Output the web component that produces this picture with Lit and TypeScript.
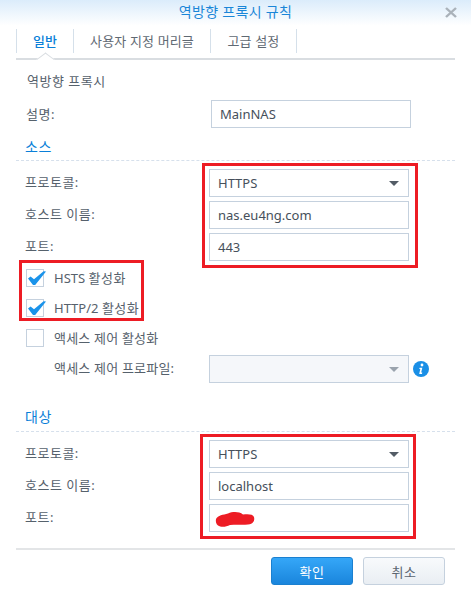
import { LitElement, html, css } from "lit";
import { customElement } from "lit/decorators.js";

const check = html`<svg class="tick" viewBox="0 0 18 14"><path d="M0 7.5 L2.6 5.4 L6 8.2 L15.6 0.2 L18 0.6 L7.2 14 L5 14 Z" fill="#1a93ea"/></svg>`;
const arrow = html`<svg class="arrow" viewBox="0 0 10 5"><path d="M0 0H10L5 5Z"/></svg>`;

@customElement("app-root")
export class AppRoot extends LitElement {
  static styles = css`
    :host { display: block; position: relative; width: 471px; height: 589px; overflow: hidden; background: #fff;
      font-family: "Noto Sans", "Noto Sans CJK KR", sans-serif; font-size: 13px; color: #56616c; }
    * { box-sizing: border-box; }
    .ko { letter-spacing: .5px; }
    .ko.tight { letter-spacing: .2px; }
    .head { height: 28px; display: flex; align-items: center; justify-content: center; position: relative;
      background: linear-gradient(#dbecfb, #ffffff 92%); color: #1a86d8; font-size: 14px; letter-spacing: .3px; padding-bottom: 6px; }
    .close { position: absolute; left: 445px; top: 6.5px; width: 12px; height: 11px; }
    .tabs { margin: 0 16px; height: 32px; border-bottom: 2px solid #d9dde1; display: flex; align-items: flex-start; position: relative; padding-top: 1px; }
    .tab { height: 24px; display: flex; align-items: center; justify-content: center; border-right: 1px solid #d5e0ea; color: #5f6973; font-size: 13px; letter-spacing: .15px; padding-bottom: 2px; }
    .tab.a { width: 58px; border-left: 1px solid #d5e0ea; color: #0a7fd8; font-weight: 500; }
    .tab.b { width: 137px; }
    .tab.c { width: 86px; }
    .notch { position: absolute; left: 23px; top: 25px; width: 13px; height: 13px; background: #fff; border-left: 1px solid #d9dde1; border-top: 1px solid #d9dde1; transform: scaleY(.75) rotate(45deg); }
    .body { padding: 0 16px; }
    .intro { margin: 11px 0 0 11px; height: 20px; line-height: 20px; padding-bottom: 1px; }
    .row { display: flex; align-items: center; height: 28px; margin-top: 4px; padding-left: 9px; }
    .row.first { margin-top: 8px; }
    .row.desc { margin-top: 9px; padding-left: 10px; }
    .row .lab { width: 184px; flex: none; padding-bottom: 3px; }
    .row.desc .lab { width: 185px; padding-bottom: 2px; }
    .field { width: 200px; height: 28px; border: 1px solid #c5d1de; display: flex; align-items: center; justify-content: space-between; padding: 0 9px 1px 8px; background: #fff; color: #46505b; }
    .field.off { background: #f5f7fa; }
    .arrow { width: 10px; height: 5px; fill: #535c66; margin-top: 1px; }
    .field.off .arrow { fill: #9aa3ad; }
    .info { width: 16px; height: 16px; margin-left: 4px; flex: none; }
    .sect { height: 25px; border-bottom: 1px dashed #d6e0ec; margin-top: 8px; color: #0a7fd8; font-size: 14px; line-height: 22px; padding-left: 9px; letter-spacing: .5px; }
    .sect.tgt { margin-top: 24px; line-height: 20px; }
    .chk { display: flex; align-items: center; height: 18px; margin: 12px 0 0 10px; position: relative; }
    .chk.first { margin-top: 8px; }
    .txt { padding-bottom: 2px; }
    .box { width: 18px; height: 18px; border: 1px solid #c5d1de; margin-right: 10px; position: relative; flex: none; }
    .tick { position: absolute; left: 1px; top: 1px; width: 18px; height: 14px; }
    .row.sub { margin-top: 8px; }
    .row.sub .lab { padding-left: 29px; }
    .foot { margin: 16px 16px 0; border-top: 2px solid #e3e5e7; display: flex; justify-content: flex-end; gap: 10px; padding: 7px 10px 0 0; }
    .btn { width: 82px; height: 28px; border-radius: 3px; display: flex; align-items: center; justify-content: center; font-size: 13px; letter-spacing: .5px; }
    .ok { background: linear-gradient(#35a7f8, #1a85dc); border: 1px solid #1b80d0; color: #fff; }
    .no { background: linear-gradient(#f8fafc, #e9eef3); border: 1px solid #c5d1de; color: #5b6570; }
    .mark { position: absolute; border: 3px solid #ed1c24; }
    .m1 { left: 202px; top: 163px; width: 216px; height: 105px; }
    .m2 { left: 19px; top: 260px; width: 125px; height: 61px; }
    .m3 { left: 200px; top: 434px; width: 216px; height: 105px; }
    .blot { position: absolute; left: 215px; top: 510px; width: 40px; height: 18px; }
  `;

  render() {
    return html`
      <div class="head">역방향 프록시 규칙
        <svg class="close" viewBox="0 0 12 12" preserveAspectRatio="none"><path d="M1 1L11 11M11 1L1 11" stroke="#aab2ba" stroke-width="2.4"/></svg>
      </div>
      <div class="tabs">
        <div class="tab a">일반</div><div class="tab b">사용자 지정 머리글</div><div class="tab c">고급 설정</div>
        <div class="notch"></div>
      </div>
      <div class="body">
        <div class="intro ko">역방향 프록시</div>
        <div class="row desc"><div class="lab ko">설명:</div><div class="field">MainNAS</div></div>
        <div class="sect">소스</div>
        <div class="row first"><div class="lab ko">프로토콜:</div><div class="field">HTTPS${arrow}</div></div>
        <div class="row"><div class="lab ko">호스트 이름:</div><div class="field">nas.eu4ng.com</div></div>
        <div class="row"><div class="lab ko">포트:</div><div class="field">443</div></div>
        <div class="chk first"><span class="box">${check}</span><span class="txt">HSTS <span class="ko">활성화</span></span></div>
        <div class="chk"><span class="box">${check}</span><span class="txt">HTTP/2 <span class="ko">활성화</span></span></div>
        <div class="chk"><span class="box"></span><span class="txt ko tight">액세스 제어 활성화</span></div>
        <div class="row sub"><div class="lab ko tight">액세스 제어 프로파일:</div><div class="field off"><span></span>${arrow}</div>
          <svg class="info" viewBox="0 0 16 16"><circle cx="8" cy="8" r="8" fill="#1a8fe6"/><circle cx="9" cy="4" r="1.4" fill="#fff"/><path d="M6.6 6.8H9.3L8.2 11.6H9.3L9 13H6.2L7.3 8.1H6.3Z" fill="#fff"/></svg>
        </div>
        <div class="sect tgt">대상</div>
        <div class="row first"><div class="lab ko">프로토콜:</div><div class="field">HTTPS${arrow}</div></div>
        <div class="row"><div class="lab ko">호스트 이름:</div><div class="field">localhost</div></div>
        <div class="row"><div class="lab ko">포트:</div><div class="field"></div></div>
      </div>
      <div class="foot"><div class="btn ok">확인</div><div class="btn no">취소</div></div>
      <div class="mark m1"></div><div class="mark m2"></div><div class="mark m3"></div>
      <svg class="blot" viewBox="0 0 40 18"><path d="M1 9C3 5 8 5 13 3.5C18 1.5 24 1.5 28 4.5C33 4 38 4 39 7C40 11 38 14 33 14.5C25 15 20 14.5 15 15C11 17 6 17.5 3 15.5C1 14 0.5 11 1 9Z" fill="#ed1c24"/></svg>
    `;
  }
}
